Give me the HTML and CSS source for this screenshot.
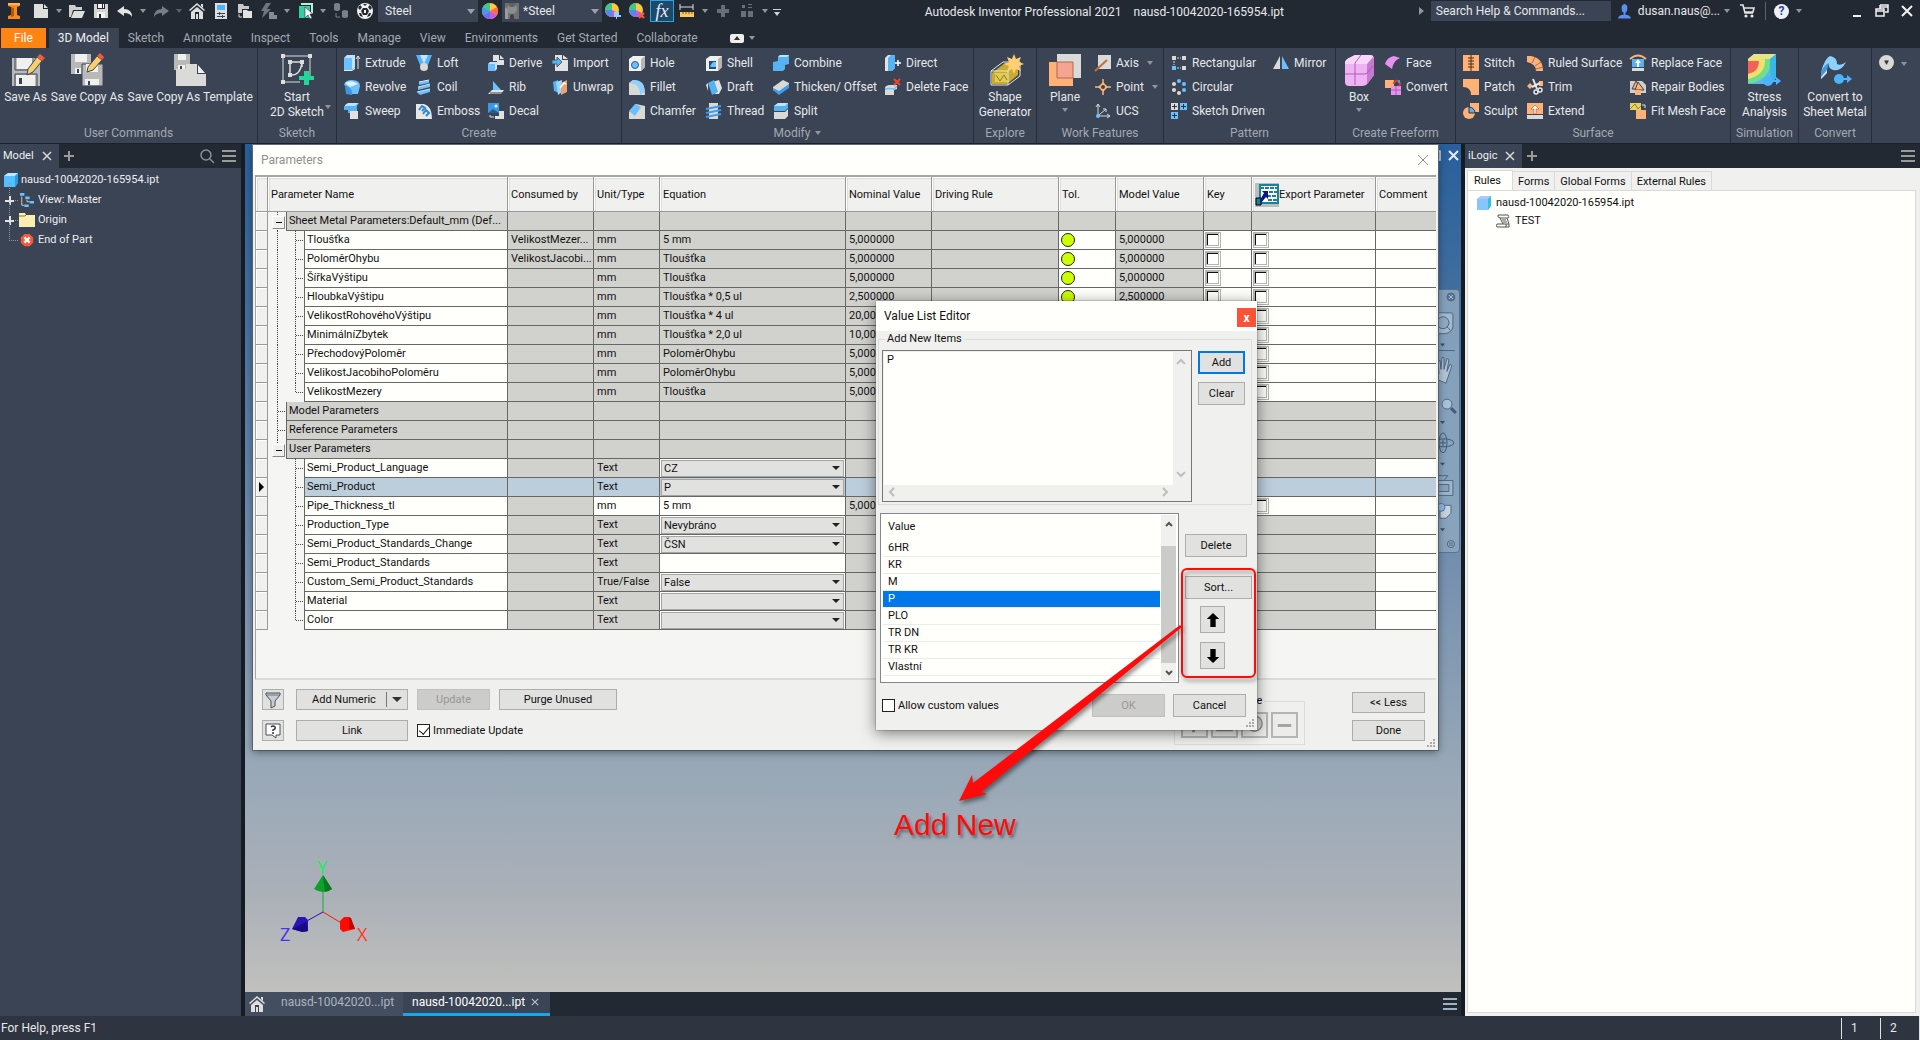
FILE: index.html
```html
<!DOCTYPE html>
<html lang="en">
<head>
<meta charset="utf-8">
<title>Autodesk Inventor Professional 2021</title>
<link rel="stylesheet" href="styles.css">
</head>
<body>
<header class="titlebar">
  <div class="qat">
    <svg class="logo" viewBox="0 0 16 18"><path d="M2 1h12v3l-3 1v8l3 1v3H2v-3l3-1V5L2 4z" fill="#f58a1e"/><path d="M5 5l3 1v8l-3 1z" fill="#b65606"/><path d="M2 1h12v2H2z" fill="#ffb35e"/></svg>
    <button class="ico" aria-label="New"><svg viewBox="0 0 16 16"><path d="M1 1h9v5h5v9H1z" fill="#dededc"/><path d="M11 1l4 4h-4z" fill="#dededc"/></svg></button><i class="caret"></i>
    <button class="ico" aria-label="Open"><svg viewBox="0 0 16 16"><path d="M0 2h6l1 2h6v3H4l-2 7H0z" fill="#cfcfcd"/><path d="M5 8h11l-3 7H2z" fill="#dededc"/></svg></button>
    <button class="ico" aria-label="Save"><svg viewBox="0 0 16 16"><path d="M1 1h14v14H1z" fill="#d5d5d3"/><path d="M4 1h8v5H4z" fill="#222933"/><path d="M5 1h4v4H5zM10 1h1v4h-1zM4 9h8v6H4z" fill="#f4f4f2"/><path d="M6 11h2v4H6z" fill="#222933"/></svg></button>
    <button class="ico" aria-label="Undo"><svg viewBox="0 0 16 16"><path d="M0 8l7-5v3q8 0 8 8-2-4-8-4v3z" fill="#e4e4e2"/></svg></button><i class="caret"></i>
    <button class="ico dim" aria-label="Redo"><svg viewBox="0 0 16 16"><path d="M16 8L9 3v3q-8 0-8 8 2-4 8-4v3z" fill="#787d85"/></svg></button><i class="caret dim"></i>
    <button class="ico" aria-label="Home"><svg viewBox="0 0 16 16"><path d="M8 0l8 7-1 1-7-6-7 6-1-1zM12 1h2v4l-2-2z" fill="#dededc"/><path d="M2 9l6-5 6 5v7H2z" fill="#dededc"/><path d="M6 9h4v7H9v-5H7v5H6z" fill="#222933"/></svg></button>
    <button class="ico" aria-label="Properties"><svg viewBox="0 0 16 16"><path d="M2 0h12v16H2z" fill="#dededc"/><path d="M4 2h8v5H4z" fill="#4cb4ff"/><path d="M4 10h8v1H4zM4 13h8v1H4zM6 9h1v3H6zM9 12h1v3H9z" fill="#3b4454"/></svg></button>
    <button class="ico" aria-label="Project"><svg viewBox="0 0 16 16"><path d="M1 1h5l1 2h5v3H5v4H1z" fill="#c9c9c7"/><path d="M6 7h4l1 1h4v7H6z" fill="#e4e4e2"/><path d="M2 11v3h3" stroke="#dededc" fill="none"/></svg></button>
    <button class="ico dim" aria-label="Local update"><svg viewBox="0 0 16 16"><path d="M5 0h5L6 6h4L1 15l2-7H0z" fill="#70757d"/><path d="M8 9h5v3h3v4H8z" fill="#858a91"/></svg></button><i class="caret"></i>
    <button class="ico" aria-label="Select"><svg viewBox="0 0 16 16"><path d="M4 0h12v11h-2V2H4z" fill="#bdeedd"/><path d="M2 3h11v12H2z" fill="#35cf9d"/><path d="M8 4v11l3-3 2 4 2-1-2-4h3z" fill="#fff" stroke="#222933" stroke-width=".6"/></svg></button><i class="caret"></i>
    <button class="ico dim" aria-label="Relationships"><svg viewBox="0 0 16 16"><path d="M1 1q3-2 6 0v6q-3 2-6 0zM9 8q3-2 6 0v6q-3 2-6 0z" fill="#7b8088"/><path d="M3 10v4h4" stroke="#7b8088" fill="none"/></svg></button>
    <button class="ico" aria-label="Material"><svg viewBox="0 0 16 16"><circle cx="8" cy="8" r="8" fill="#f1f1ef"/><path d="M6 5h4l2 3-2 4H6L4 8zM1 5l2-3 2 2-2 3zM15 5l-2-3-2 2 2 3zM3 13l-1-3h2l2 4zM13 13l1-3h-2l-2 4zM6 1h4L8 3z" fill="#222933"/><path d="M7 7h2v3H7z" fill="#f1f1ef"/></svg></button>
    <div class="combo"><select aria-label="Material"><option>Steel</option></select></div>
    <svg class="wheel" viewBox="0 0 16 16"><circle cx="8" cy="8" r="8" fill="#ffc83d"/><path d="M8 8V0a8 8 0 0 0-7 4z" fill="#3ec98b"/><path d="M8 8L1 4a8 8 0 0 0 0 8z" fill="#3f9cf0"/><path d="M8 8l-7 4a8 8 0 0 0 7 4z" fill="#6d6cf2"/><path d="M8 8v8a8 8 0 0 0 7-4z" fill="#c35ae8"/><path d="M8 8l7 4a8 8 0 0 0 0-8z" fill="#ff6a4a"/></svg>
    <div class="combo thumb"><svg viewBox="0 0 14 16"><path d="M0 0h14v16H0z" fill="#6f7173"/><circle cx="7" cy="6" r="5" fill="#8c8d8e"/><path d="M3 0h8L9 4H5z" fill="#5f6163"/><path d="M5 16q0-5 2-5t2 5z" fill="#3d3f41"/><path d="M0 4l3 3v9H0z" fill="#9b9c9d"/></svg><select aria-label="Appearance"><option>*Steel</option></select></div>
    <button class="ico" aria-label="Adjust"><svg viewBox="0 0 16 16"><circle cx="7" cy="7" r="7" fill="#ffc83d"/><path d="M7 7V0a7 7 0 0 0-7 7z" fill="#3ec98b"/><path d="M7 7H0a7 7 0 0 0 7 7z" fill="#5a84f2"/><path d="M7 7v7a7 7 0 0 0 6-4z" fill="#c35ae8"/><path d="M9 9h5v3h2v2h-4v2h-1v-2H9z" fill="#8fd0ff"/></svg></button>
    <button class="ico" aria-label="Clear overrides"><svg viewBox="0 0 16 16"><circle cx="7" cy="7" r="7" fill="#ffc83d"/><path d="M7 7V0a7 7 0 0 0-7 7z" fill="#3ec98b"/><path d="M7 7H0a7 7 0 0 0 7 7z" fill="#5a84f2"/><path d="M7 7v7a7 7 0 0 0 6-4z" fill="#c35ae8"/><path d="M10 10l5 5M15 10l-5 5" stroke="#ff5a3c" stroke-width="2"/></svg></button>
    <button class="fx" aria-label="Parameters"><em>fx</em></button>
    <button class="ico" aria-label="Measure"><svg viewBox="0 0 16 16"><path d="M1 1v6M14 1v6M1 4h13" stroke="#dededc"/><path d="M1 9h14v5H1z" fill="#ffc95c"/><path d="M4 9v2M7 9v2M10 9v2M13 9v2" stroke="#7a5a10"/></svg></button><i class="caret"></i>
    <button class="ico dim" aria-label="Add"><svg viewBox="0 0 16 16"><path d="M6 2h4v4h4v4h-4v4H6v-4H2V6h4z" fill="#6a6f77"/></svg></button>
    <button class="ico dim" aria-label="Pattern"><svg viewBox="0 0 16 16"><path d="M3 2h3v3H3zM9 1h4v1H9zM9 4h4v1H9zM2 8h5v6H2zM9 8h5v6H9z" fill="#6a6f77"/></svg></button><i class="caret"></i>
    <i class="caret bar"></i>
  </div>
  <div class="apptitle"><span>Autodesk Inventor Professional 2021</span><span>nausd-10042020-165954.ipt</span></div>
  <div class="account">
    <i class="tri"></i>
    <input class="search" aria-label="Search" value="Search Help &amp; Commands...">
    <svg class="person" viewBox="0 0 14 16"><path d="M4 3q3-5 6 0v4q-1 3-2 3v2q5 0 6 4H0q1-4 6-4v-2Q4 9 4 7z" fill="#5c8df0"/></svg>
    <button class="plain">dusan.naus@...</button><i class="caret"></i>
    <svg class="cart" viewBox="0 0 16 16"><path d="M1 2h3l2 8h8M5 5h10l-1 4H6" stroke="#e4e4e2" stroke-width="1.6" fill="none"/><circle cx="7" cy="13" r="1.6" fill="#e4e4e2"/><circle cx="13" cy="13" r="1.6" fill="#e4e4e2"/></svg>
    <i class="vsep"></i>
    <button class="help" aria-label="Help">?</button><i class="caret"></i>
    <button class="win" aria-label="Minimize"><svg viewBox="0 0 14 14"><path d="M3 11h8v2H3z" fill="#f2f2f2"/></svg></button>
    <button class="win" aria-label="Restore"><svg viewBox="0 0 14 14"><path d="M5 1h8v7h-3M1 5h8v7H1zM5 1v4M5 3h8M1 7h8" stroke="#f2f2f2" stroke-width="1.5" fill="none"/></svg></button>
    <button class="win" aria-label="Close"><svg viewBox="0 0 14 14"><path d="M2 2l10 10M12 2L2 12" stroke="#f2f2f2" stroke-width="2"/></svg></button>
  </div>
</header>

<nav class="tabs">
  <a href="#" class="file">File</a><a href="#" class="on">3D Model</a><a href="#">Sketch</a><a href="#">Annotate</a><a href="#">Inspect</a><a href="#">Tools</a><a href="#">Manage</a><a href="#">View</a><a href="#">Environments</a><a href="#">Get Started</a><a href="#">Collaborate</a>
  <button class="mini" aria-label="Minimize ribbon"></button><i class="caret"></i>
</nav>

<section class="ribbon">
  <div class="panel p-user">
    <div class="body">
      <button class="big"><svg viewBox="0 0 32 32"><path d="M2 4h28v28H2z" fill="#b9bab8"/><path d="M7 4h17v11H7zM6 21h19v11H6z" fill="#f0f0ee"/><path d="M9 24h3v6H9z" fill="#3b4454"/><path d="M5 4v12h18V4M5 32V20h22v12" stroke="#3b4454" fill="none"/><path d="M18 15L27 3l5 4-9 11-6 3z" fill="#f7cf6d" stroke="#3b4454"/><path d="M27 3l3-3 5 4-3 3z" fill="#f2593f"/></svg>Save As</button>
      <button class="big"><svg viewBox="0 0 32 32"><path d="M0 0h20v20H0z" fill="#b9bab8"/><path d="M4 0h12v8H4zM4 14h6v6H4z" fill="#f0f0ee"/><path d="M11 10h21v22H11z" fill="#b9bab8" stroke="#3b4454"/><path d="M15 10h12v8H15zM14 25h14v6H14z" fill="#f0f0ee"/><path d="M17 27h2v4h-2zM6 15h2v4H6z" fill="#3b4454"/><path d="M17 13L26 2l5 4-9 10-6 2z" fill="#f7cf6d" stroke="#3b4454"/><path d="M26 2l3-3 4 4-2 3z" fill="#f2593f"/></svg>Save Copy As</button>
      <button class="big"><svg viewBox="0 0 32 32"><path d="M0 0h16v16H0z" fill="#b9bab8"/><path d="M4 0h8v6H4zM4 11h7v5H4z" fill="#f0f0ee"/><path d="M6 12h2v4H6z" fill="#3b4454"/><path d="M2 15h10v-5h11v10h9v12H2z" fill="#dadad8"/><path d="M24 11l7 8h-7z" fill="#f0f0ee"/></svg>Save Copy As Template</button>
    </div><h2>User Commands</h2>
  </div>
  <div class="panel p-sketch">
    <div class="body"><button class="big"><svg viewBox="0 0 32 32"><path d="M2 2h27v20M2 2v26h17" stroke="#dededc" fill="none"/><path d="M0 0h4v4H0zM27 0h4v4h-4zM0 26h4v4H0z" fill="#dededc"/><path d="M9 8h12v5M9 8v13q10 1 12-12" stroke="#dededc" stroke-width="1.5" fill="none"/><path d="M7 6h4v4H7zM19 6h4v4h-4zM7 19h4v4H7z" fill="#dededc"/><path d="M23 17h5v5h5v4h-5v5h-5v-5h-5v-4h5z" fill="#20d79b"/></svg>Start<br>2D Sketch</button><i class="caret low"></i></div>
    <h2>Sketch</h2>
  </div>
  <div class="panel p-create">
    <div class="body cols">
      <button><svg viewBox="0 0 16 16"><path d="M0 3l3-3h8v12l-3 3H0z" fill="#bfe3ff"/><path d="M0 3h8v12H0z" fill="#6cc0ff"/><path d="M0 15h8l3-3v2l-3 2H0z" fill="#e8e8e6"/><path d="M14 14V1M12 4l2-3 2 3" stroke="#e8e8e6" fill="none"/></svg>Extrude</button>
      <button><svg viewBox="0 0 16 16"><path d="M0 0h16l-4 10H4z" fill="#55b2f5"/><path d="M4 0h8L8 9z" fill="#bfe3ff"/><circle cx="8" cy="12" r="4" fill="#d9d9d6"/></svg>Loft</button>
      <button><svg viewBox="0 0 16 16"><path d="M5 0h6v5h5v5H9V6H5z" fill="#e2e2e0"/><path d="M12 0l4 4h-4z" fill="#e2e2e0"/><path d="M0 9l2-2h7v7l-2 2H0z" fill="#bfe3ff"/><path d="M0 9h7v7H0z" fill="#6cc0ff"/></svg>Derive</button>
      <button><svg viewBox="0 0 16 16"><path d="M3 0h7v5h6v11H3z" fill="#e2e2e0"/><path d="M11 0l5 4h-5z" fill="#e2e2e0"/><path d="M0 5h5V2l5 5-5 5V9H0z" fill="#55b2f5" stroke="#3b4454" stroke-width=".8"/></svg>Import</button>
      <button><svg viewBox="0 0 16 16"><path d="M0 6q1-5 8-5 8 0 8 6l-2 8H6q2-6-6-9z" fill="#6cc0ff"/><path d="M1 4q7-4 13 1l-8 3z" fill="#dff1ff"/><path d="M1 7q8 1 7 9l-6-1z" fill="#3f97e0"/></svg>Revolve</button>
      <button><svg viewBox="0 0 16 16"><path d="M3 3l10-2v3L3 6zM2 8l12-3v3L2 11zM1 13l13-3v3L4 16z" fill="#6cc0ff"/><path d="M3 3l10-2M2 8l12-3M1 13l13-3" stroke="#cfeaff"/></svg>Coil</button>
      <button><svg viewBox="0 0 16 16"><path d="M4 0v11h12l-3 4H0l4-4z" fill="#e2e2e0"/><path d="M5 2l8 9H5z" fill="#6cc0ff"/><path d="M2 14h12" stroke="#3b4454"/></svg>Rib</button>
      <button><svg viewBox="0 0 16 16"><path d="M1 3l5-2 1 13-5-2z" fill="#55b2f5"/><path d="M4 3l6-2v12l-4 3z" fill="#9ad6ff"/><path d="M9 4l6-3v12l-6 3z" fill="#e8a273"/><path d="M8 9l4-5 2 1" stroke="#fff" stroke-width="1.5" fill="none"/></svg>Unwrap</button>
      <button><svg viewBox="0 0 16 16"><path d="M0 3h7l2-3h6l-2 3v7H4V7H0z" fill="#55b2f5"/><path d="M1 2l3-2h10l-3 3H1z" fill="#bfe3ff"/><path d="M6 8h8v8H6z" fill="#e2e2e0"/></svg>Sweep</button>
      <button><svg viewBox="0 0 16 16"><path d="M0 1h8q8 2 8 15H0z" fill="#e8e8e6"/><path d="M3 7l3-4 3 2-3 3M7 11l3-4 3 3-3 3" stroke="#2a86d6" stroke-width="2" fill="none"/></svg>Emboss</button>
      <button><svg viewBox="0 0 16 16"><path d="M0 0h11v10H0z" fill="#3f97e0"/><path d="M0 10l5-4 6 4z" fill="#1c5f9e"/><circle cx="8" cy="3" r="1.5" fill="#dff1ff"/><path d="M11 8h5v8H7v-3h4z" fill="#e2e2e0"/><path d="M2 12v2h4" stroke="#e2e2e0" fill="none"/></svg>Decal</button>
    </div><h2>Create</h2>
  </div>
  <div class="panel p-modify">
    <div class="body cols">
      <button><svg viewBox="0 0 16 16"><path d="M0 4l4-3h12v11l-4 4H0z" fill="#f0f0ee"/><path d="M12 4l4-3v11l-4 4z" fill="#b6b6b4"/><circle cx="6" cy="10" r="3.500" fill="#6cc0ff" stroke="#2a5a85"/></svg>Hole</button>
      <button><svg viewBox="0 0 16 16"><path d="M0 4l4-3h12v11l-4 4H0z" fill="#f0f0ee"/><path d="M12 4l4-3v11l-4 4z" fill="#b6b6b4"/><path d="M3 6h7v8H3z" fill="#1f4f7c"/><path d="M4 11l3-4h3v5H5z" fill="#6cc0ff"/></svg>Shell</button>
      <button><svg viewBox="0 0 16 16"><path d="M0 7l5-1V2l2-2h9v9l-4 1v4l-2 2H0z" fill="#55b2f5"/><path d="M5 2l2-2h9l-2 2z" fill="#bfe3ff"/></svg>Combine</button>
      <button><svg viewBox="0 0 16 16"><path d="M0 3l3-3h7v13l-3 3H0z" fill="#e2e2e0"/><path d="M3 3l3-3h4v13l-3 3H3z" fill="#55b2f5"/><path d="M10 8h6M13 5v6" stroke="#fff" stroke-width="1.500"/></svg>Direct</button>
      <button><svg viewBox="0 0 16 16"><path d="M0 4l4-3q12 0 12 15H0z" fill="#d9d9d6"/><path d="M4 1q11-1 12 11l-5 4Q11 4 0 4z" fill="#8fd0ff"/></svg>Fillet</button>
      <button><svg viewBox="0 0 16 16"><path d="M6 3l7-2 3 8-3 6H9z" fill="#e2e2e0"/><path d="M2 4l6-3 4 12-6 3z" fill="#55b2f5"/><path d="M0 6l2-2v8z" fill="#e2e2e0"/></svg>Draft</button>
      <button><svg viewBox="0 0 16 16"><path d="M0 8L10 1l6 3v4L6 15 0 11z" fill="#d9d9d6"/><path d="M0 11v-2l6 3 10-7v4L6 16z" fill="#3f9df0"/></svg>Thicken/ Offset</button>
      <button><svg viewBox="0 0 16 16"><path d="M0 9q0-2 4-3h8v4l-3 1v5H0z" fill="#d9d9d6"/><path d="M0 10q4-1 9 0l3-3" stroke="#6cc0ff" fill="none" stroke-width="1.500"/><path d="M9 0l6 6M15 0L9 6" stroke="#f2432c" stroke-width="2"/></svg>Delete Face</button>
      <button><svg viewBox="0 0 16 16"><path d="M0 9l7-8 9 2v13H0z" fill="#d9d9d6"/><path d="M0 8l6-7 6 3-6 9z" fill="#6cc0ff"/></svg>Chamfer</button>
      <button><svg viewBox="0 0 16 16"><path d="M3 0h9v16H3z" fill="#d9d9d6"/><path d="M0 6l15-3M0 10l15-3M0 14l15-3" stroke="#3f9df0" stroke-width="2"/></svg>Thread</button>
      <button><svg viewBox="0 0 16 16"><path d="M1 3l4-3h10v5l-3 3H1z" fill="#55b2f5"/><path d="M1 3l4-3h10l-3 3z" fill="#bfe3ff"/><path d="M1 9h11l3-3v7l-3 3H1z" fill="#d9d9d6"/></svg>Split</button>
    </div><h2>Modify <i class="caret"></i></h2>
  </div>
  <div class="panel p-explore">
    <div class="body"><button class="big"><svg viewBox="0 0 32 32"><path d="M3 19L16 9h13v12L18 30H3z" fill="#c9ab2e"/><path d="M6 19h12v9H6z" fill="#e3cb56"/><path d="M2 17h17v14H2zM2 17L14 8h17v14L19 31M19 17L31 8" stroke="#e8e8e6" fill="none"/><path d="M7 21l4 6 4-6 3 5" stroke="#8f7a1f" fill="none"/><path d="M25 0l2 5 5-2-2 5 5 2-5 2 2 5-5-2-2 5-2-5-5 2 2-5-5-2 5-2-2-5 5 2z" fill="#ffd071"/></svg>Shape<br>Generator</button></div>
    <h2>Explore</h2>
  </div>
  <div class="panel p-work">
    <div class="body">
      <button class="big"><svg viewBox="0 0 32 32"><path d="M8 0h24v24H8z" fill="#dadad8"/><path d="M0 8h24v24H0z" fill="#ffb277"/><path d="M8 8h16v16H8z" fill="#f5a58f"/><path d="M8 24V8h16v16z" fill="none" stroke="#b2664e"/></svg>Plane<i class="caret under"></i></button>
      <div class="stack">
        <button><svg viewBox="0 0 16 16"><path d="M3 0h13v14H3z" fill="#dadad8"/><path d="M0 16L12 5" stroke="#c46e3a" stroke-width="2"/></svg>Axis<i class="caret"></i></button>
        <button><svg viewBox="0 0 16 16"><path d="M8 0v16M0 8h16" stroke="#ffb277" stroke-width="1.500"/><path d="M8 3l5 5-5 5-5-5z" fill="#ffb277"/><circle cx="8" cy="8" r="2" fill="#3b4454"/></svg>Point<i class="caret"></i></button>
        <button><svg viewBox="0 0 16 16"><path d="M3 14V1M1 4l2-3 2 3M3 13h12M12 11l3 2-3 2M4 12l7-6M8 6h3v3" stroke="#dadad8" fill="none"/><circle cx="3" cy="13" r="2" fill="#6cc0ff"/></svg>UCS</button>
      </div>
    </div><h2>Work Features</h2>
  </div>
  <div class="panel p-pattern">
    <div class="body cols">
      <button><svg viewBox="0 0 16 16"><path d="M1 1h4v4H1zM11 11h4v4h-4zM11 1h4v4h-4z" fill="#dadad8"/><path d="M1 11h4v4H1z" fill="#6cc0ff"/><path d="M6 3h4M6 13h4M3 6v4" stroke="#dadad8" stroke-dasharray="2 1"/></svg>Rectangular</button>
      <button><svg viewBox="0 0 16 16"><path d="M0 14L7 1v13z" fill="#dadad8"/><path d="M9 1l7 13H9z" fill="#6cc0ff"/></svg>Mirror</button>
      <button class="c1"><svg viewBox="0 0 16 16"><g fill="#6cc0ff"><circle cx="8" cy="2" r="2"/><circle cx="13" cy="5" r="2"/><circle cx="13" cy="11" r="2"/></g><g fill="#dadad8"><circle cx="8" cy="14" r="2"/><circle cx="3" cy="11" r="2"/><circle cx="3" cy="5" r="2"/></g></svg>Circular</button>
      <button class="c1"><svg viewBox="0 0 16 16"><path d="M0 0h7v7H0z" fill="#dadad8"/><path d="M9 0h7v7H9zM0 9h7v7H0z" fill="#6cc0ff"/><path d="M3.500 1v5M1 3.500h5M12.500 1v5M10 3.500h5M3.500 10v5M1 12.500h5" stroke="#2c3442"/></svg>Sketch Driven</button>
    </div><h2>Pattern</h2>
  </div>
  <div class="panel p-free">
    <div class="body">
      <button class="big"><svg viewBox="0 0 32 32"><path d="M2 9q0-3 4-5l6-3h15q4 0 4 4v16l-6 8q-2 3-6 3H6q-4 0-4-4z" fill="#efb3f4"/><path d="M24 9l6-6q1 1 1 3v15l-7 9z" fill="#c878d2"/><path d="M2 9q0-3 4-5l6-3h15q3 0 3 2l-6 7H2z" fill="#f7d6fa"/><path d="M12 9v22M2 20h21l7-8M12 9l6-8" stroke="#a95fb5" fill="none"/></svg>Box<i class="caret under"></i></button>
      <div class="stack">
        <button><svg viewBox="0 0 16 16"><path d="M0 9Q2 2 9 1l6 2Q8 6 7 14z" fill="#ea90f0"/></svg>Face</button>
        <button><svg viewBox="0 0 16 16"><path d="M0 1h9v8H0z" fill="#ffb277"/><path d="M6 7h10v9H6z" fill="#ea90f0"/><path d="M11 7v9M6 11h10" stroke="#a95fb5"/><path d="M9 5a3 3 0 1 1 5 2" stroke="#e03c28" stroke-width="2" fill="none"/><path d="M14 1v3" stroke="#3f9df0" stroke-width="2"/></svg>Convert</button>
      </div>
    </div><h2>Create Freeform</h2>
  </div>
  <div class="panel p-surface">
    <div class="body cols">
      <button><svg viewBox="0 0 16 16"><path d="M0 0h16v16H0z" fill="#ffb277"/><path d="M8 0v16M5 3h6M5 6h6M5 9h6M5 12h6" stroke="#4a2c14"/></svg>Stitch</button>
      <button><svg viewBox="0 0 16 16"><path d="M0 1h4q12 2 12 15H9Q9 9 0 7z" fill="#ffb277"/><path d="M5 8l3-6M8 11l6-4M9 14l7-2" stroke="#b2664e"/></svg>Ruled Surface</button>
      <button><svg viewBox="0 0 16 16"><path d="M0 4q8-7 16 0" stroke="#ffb277" stroke-width="2" fill="none"/><path d="M2 4h12v8H2z" fill="#55b2f5"/><path d="M8 4l3 4H9v4H7V8H5z" fill="#fff"/><path d="M2 13h12v3H2z" fill="#dadad8"/></svg>Replace Face</button>
      <button><svg viewBox="0 0 16 16"><path d="M0 0h16v16H8q0-8-8-8z" fill="#ffb277"/></svg>Patch</button>
      <button><svg viewBox="0 0 16 16"><path d="M0 7l3-3 3 3-3 3zM12 2h4v5h-4z" fill="#ffb277"/><path d="M6 0l4 10M13 4L5 8" stroke="#e8e8e6" stroke-width="2"/><circle cx="9" cy="13" r="2" fill="none" stroke="#e8e8e6" stroke-width="1.500"/><circle cx="13" cy="11" r="2" fill="none" stroke="#e8e8e6" stroke-width="1.500"/></svg>Trim</button>
      <button><svg viewBox="0 0 16 16"><path d="M0 2h12l4 4v8H0z" fill="#cfcfcd"/><path d="M6 2l5 8H2z" fill="#ffb277" stroke="#3b4454"/><path d="M8 3l6 8H5z" fill="#ffb277" stroke="#3b4454"/><path d="M5 11h6v5H5z" fill="#ffb277"/></svg>Repair Bodies</button>
      <button><svg viewBox="0 0 16 16"><path d="M7 0h9v9H7z" fill="#ffb277"/><circle cx="6" cy="10" r="6" fill="#ffb277"/><path d="M6 4v6h6a6 6 0 0 0-6-6z" fill="#55b2f5" stroke="#2c3442"/></svg>Sculpt</button>
      <button><svg viewBox="0 0 16 16"><path d="M0 0h16v11H0z" fill="#ffb277"/><path d="M8 2l4 4H9v5H7V6H4z" fill="#fff" stroke="#7a4a24" stroke-width=".5"/><path d="M0 12h16v4H0z" fill="#dadad8"/></svg>Extend</button>
      <button><svg viewBox="0 0 16 16"><path d="M0 0h11v7H0z" fill="#e5d36a"/><path d="M0 6l5-5 3 5 3-3" stroke="#95842a" fill="none"/><path d="M6 7h10v9H6z" fill="#ffb277"/><path d="M12 2h3v3" stroke="#e8e8e6" fill="none"/></svg>Fit Mesh Face</button>
    </div><h2>Surface</h2>
  </div>
  <div class="panel p-sim">
    <div class="body"><button class="big"><svg viewBox="0 0 32 32"><path d="M0 5l6-5h22v24l-5 6H0z" fill="#5bb5f2"/><path d="M0 5h22q2 19-18 24H0z" fill="#6ee08a"/><path d="M0 5h17q1 16-17 20z" fill="#f3e06a"/><path d="M0 7h11q0 11-11 13z" fill="#f5605a"/><path d="M0 5l6-5h22l-6 5z" fill="#e9e487"/><path d="M22 5l6-5v24l-5 6z" fill="#37b6e8"/><circle cx="20" cy="27" r="5" fill="#4cb4ff"/><path d="M24 26h4v-3l5 4-5 4v-3h-4z" fill="#4cb4ff"/></svg>Stress<br>Analysis</button></div>
    <h2>Simulation</h2>
  </div>
  <div class="panel p-conv">
    <div class="body"><button class="big"><svg viewBox="0 0 32 32"><path d="M2 18q4-14 9-16 7 1 7 8 4 2 9-2-5 10-13 8-5-2-4-6-5 3-8 8z" fill="#8fd0ff"/><path d="M2 18q4-8 8-9l-3 11-5 5z" fill="#3f97e0"/><path d="M2 25l6-6v-3l-6 7z" fill="#e2e2e0"/><circle cx="20" cy="25" r="5" fill="#4cb4ff"/><path d="M24 24h4v-3l5 4-5 4v-3h-4z" fill="#4cb4ff"/></svg>Convert to<br>Sheet Metal</button></div>
    <h2>Convert</h2>
  </div>
  <div class="panel p-end"><button class="round" aria-label="Show panels">▼</button><i class="caret"></i></div>
</section>

<main class="work">
  <aside class="browser">
    <div class="ptabs"><span class="ptab">Model <svg viewBox="0 0 10 10"><path d="M1 1l8 8M9 1L1 9" stroke="#d8d8d6" stroke-width="1.500"/></svg></span><button class="plus" aria-label="Add panel"></button>
      <button class="lens" aria-label="Search"><svg viewBox="0 0 14 14"><circle cx="6" cy="6" r="5" fill="none" stroke="#8e8f90" stroke-width="1.500"/><path d="M10 10l4 4" stroke="#8e8f90" stroke-width="1.500"/></svg></button><button class="burger" aria-label="Menu"></button></div>
    <ul class="tree">
      <li><svg viewBox="0 0 14 14"><path d="M0 3l4-3h10v10l-3 4H0z" fill="#55c0ff"/><path d="M0 3l4-3h10l-3 3z" fill="#bfe6ff"/><path d="M11 3l3-3v10l-3 4z" fill="#2a9be6"/></svg>nausd-10042020-165954.ipt</li>
      <li class="br"><b></b><svg class="w16" viewBox="0 0 16 16"><path d="M0 0h5v3H0zM6 4h5v3H6zM11 9h5v3h-5zM5 13h5v3H5z" fill="#6cc0ff"/><path d="M2 4v10h3M8 8v2h3" stroke="#dadad8" fill="none"/></svg>View: Master</li>
      <li class="br"><b></b><svg class="w16" viewBox="0 0 16 14"><path d="M0 0h6l1 2h9v12H0z" fill="#fbeeb0"/><path d="M0 3h6l1-1" stroke="#8a7c3a" fill="none"/></svg>Origin</li>
      <li class="br last"><b class="none"></b><svg class="w16" viewBox="0 0 16 16"><path d="M5 1h6l4 4v6l-4 4H5l-4-4V5z" fill="#f95738"/><path d="M5 5l6 6M11 5l-6 6" stroke="#fff" stroke-width="2.500"/></svg>End of Part</li>
    </ul>
  </aside>

  <div class="canvas">
    <div class="mdi"><svg viewBox="0 0 24 12"><path d="M1 1h4v9H0" stroke="#d5e0ee" stroke-width="1.500" fill="none"/><path d="M14 1l9 9M23 1l-9 9" stroke="#e4ebf4" stroke-width="2"/></svg></div>
    <div class="navbar">
      <svg viewBox="0 0 34 264">
        <g fill="none" stroke="#4f6780"><circle cx="26" cy="7" r="4" fill="#5d758f"/><path d="M24 5l4 4M28 5l-4 4" stroke="#c4d2e0"/></g>
        <path d="M6 23h20q2 0 2 2v12q-1 6-8 7H6z" fill="#b4c6d6" stroke="#4f6780"/><circle cx="18" cy="33" r="6" fill="#9db4c9" stroke="#4f6780"/><path d="M22 37l4 4" stroke="#4f6780"/>
        <path d="M15 54h5l-2.500 3zM15 132h5l-2.500 3zM15 174h5l-2.500 3zM15 240h5l-2.500 3z" fill="#2f4660"/>
        <path d="M10 61h20" stroke="#4f6780"/>
        <path d="M14 91l-5-9 2-1 3 3-1-13h2l1 9 1-12h2v12l3-11 2 1-2 12 3-7 2 1-4 12-2 6z" fill="#c3d1de" stroke="#4f6780"/>
        <circle cx="22" cy="115" r="5" fill="#b9d0e4" stroke="#4f6780"/><path d="M26 119l5 5" stroke="#3f566e" stroke-width="3"/><path d="M10 108h4M10 115h4" stroke="#4f6780"/>
        <ellipse cx="18" cy="154" rx="4" ry="10" fill="none" stroke="#3f566e"/><ellipse cx="19" cy="154" rx="10" ry="4" fill="none" stroke="#3f566e"/><path d="M15 154h6M18 151v6" stroke="#3f566e"/>
        <path d="M8 187h15l-4 5" fill="none" stroke="#4f6780"/><path d="M6 192h22v15H6z" fill="#aabfd2" stroke="#4f6780"/><path d="M12 196h12v7H12z" fill="#8ea9c1" stroke="#4f6780"/>
        <path d="M15 221l5-4h6v8l-5 5h-6z" fill="#d6e0e9" stroke="#4f6780"/><circle cx="16" cy="219" r="4" fill="#9dbce6" stroke="#4772bb"/>
        <circle cx="26" cy="256" r="3.500" fill="#a9bccd" stroke="#3f566e"/><path d="M24 255h4M24 257h4" stroke="#3f566e"/>
      </svg>
    </div>

    <section class="window" aria-label="Parameters">
      <header><h1>Parameters</h1><button aria-label="Close"><svg viewBox="0 0 12 12"><path d="M1 1l10 10M11 1L1 11" stroke="#8f8f8d"/></svg></button></header>
      <div class="gridbox">
      <table>
        <colgroup><col class="k0"><col class="k1"><col class="k2"><col class="k3"><col class="k4"><col class="k5"><col class="k6"><col class="k7"><col class="k8"><col class="k9"><col class="k10"><col></colgroup>
        <thead><tr><th></th><th>Parameter Name</th><th>Consumed by</th><th>Unit/Type</th><th>Equation</th><th>Nominal Value</th><th>Driving Rule</th><th>Tol.</th><th>Model Value</th><th>Key</th><th class="exp"><div><svg viewBox="0 0 24 24"><path d="M0 0h24v24H0z" fill="#bdbdbb"/><path d="M5 2h18v18H5z" fill="#fff" stroke="#17829c" stroke-width="2"/><path d="M5 5h18M9 9h14M12 13h11M13 17h10" stroke="#17829c" stroke-width="2" stroke-dasharray="4 1"/><path d="M1 15h5v7H1z" fill="#17829c" stroke="#000"/><path d="M5 17l4-7-2-2h6v8l-2-2-5 6z" fill="#12128c"/></svg>Export Parameter</div></th><th>Comment</th></tr></thead>
        <tbody>
        <tr class="g"><td></td><td><div class="n grp open"><span>Sheet Metal Parameters:Default_mm (Def...</span></div></td><td></td><td></td><td></td><td></td><td></td><td></td><td></td><td></td><td></td><td></td></tr>
        <tr class="s"><td></td><td><div class="n"><span>Tloušťka</span></div></td><td>VelikostMezer...</td><td>mm</td><td>5 mm</td><td>5,000000</td><td></td><td><i class="dot"></i></td><td>5,000000</td><td><input type="checkbox" aria-label="Key"></td><td><input type="checkbox" aria-label="Export"></td><td></td></tr>
        <tr class="s"><td></td><td><div class="n"><span>PoloměrOhybu</span></div></td><td>VelikostJacobi...</td><td>mm</td><td>Tloušťka</td><td>5,000000</td><td></td><td><i class="dot"></i></td><td>5,000000</td><td><input type="checkbox" aria-label="Key"></td><td><input type="checkbox" aria-label="Export"></td><td></td></tr>
        <tr class="s"><td></td><td><div class="n"><span>ŠířkaVýštipu</span></div></td><td></td><td>mm</td><td>Tloušťka</td><td>5,000000</td><td></td><td><i class="dot"></i></td><td>5,000000</td><td><input type="checkbox" aria-label="Key"></td><td><input type="checkbox" aria-label="Export"></td><td></td></tr>
        <tr class="s"><td></td><td><div class="n"><span>HloubkaVýštipu</span></div></td><td></td><td>mm</td><td>Tloušťka * 0,5 ul</td><td>2,500000</td><td></td><td><i class="dot"></i></td><td>2,500000</td><td><input type="checkbox" aria-label="Key"></td><td><input type="checkbox" aria-label="Export"></td><td></td></tr>
        <tr class="s"><td></td><td><div class="n"><span>VelikostRohovéhoVýštipu</span></div></td><td></td><td>mm</td><td>Tloušťka * 4 ul</td><td>20,00</td><td></td><td></td><td></td><td></td><td><input type="checkbox" aria-label="Export"></td><td></td></tr>
        <tr class="s"><td></td><td><div class="n"><span>MinimálníZbytek</span></div></td><td></td><td>mm</td><td>Tloušťka * 2,0 ul</td><td>10,00</td><td></td><td></td><td></td><td></td><td><input type="checkbox" aria-label="Export"></td><td></td></tr>
        <tr class="s"><td></td><td><div class="n"><span>PřechodovýPoloměr</span></div></td><td></td><td>mm</td><td>PoloměrOhybu</td><td>5,000</td><td></td><td></td><td></td><td></td><td><input type="checkbox" aria-label="Export"></td><td></td></tr>
        <tr class="s"><td></td><td><div class="n"><span>VelikostJacobihoPoloměru</span></div></td><td></td><td>mm</td><td>PoloměrOhybu</td><td>5,000</td><td></td><td></td><td></td><td></td><td><input type="checkbox" aria-label="Export"></td><td></td></tr>
        <tr class="s"><td></td><td><div class="n end"><span>VelikostMezery</span></div></td><td></td><td>mm</td><td>Tloušťka</td><td>5,000</td><td></td><td></td><td></td><td></td><td><input type="checkbox" aria-label="Export"></td><td></td></tr>
        <tr class="g"><td></td><td><div class="n grp"><span>Model Parameters</span></div></td><td></td><td></td><td></td><td></td><td></td><td></td><td></td><td></td><td></td><td></td></tr>
        <tr class="g"><td></td><td><div class="n grp"><span>Reference Parameters</span></div></td><td></td><td></td><td></td><td></td><td></td><td></td><td></td><td></td><td></td><td></td></tr>
        <tr class="g"><td></td><td><div class="n grp open fin"><span>User Parameters</span></div></td><td></td><td></td><td></td><td></td><td></td><td></td><td></td><td></td><td></td><td></td></tr>
        <tr class="u"><td></td><td><div class="n us"><span>Semi_Product_Language</span></div></td><td></td><td>Text</td><td><select aria-label="Language"><option>CZ</option></select></td><td></td><td></td><td></td><td></td><td></td><td></td><td></td></tr>
        <tr class="u sel"><td></td><td><div class="n us"><span>Semi_Product</span></div></td><td></td><td>Text</td><td><select aria-label="Product"><option>P</option></select></td><td></td><td></td><td></td><td></td><td></td><td></td><td></td></tr>
        <tr class="u pipe"><td></td><td><div class="n us"><span>Pipe_Thickness_tl</span></div></td><td></td><td>mm</td><td>5 mm</td><td>5,000</td><td></td><td></td><td></td><td></td><td><input type="checkbox" aria-label="Export"></td><td></td></tr>
        <tr class="u"><td></td><td><div class="n us"><span>Production_Type</span></div></td><td></td><td>Text</td><td><select aria-label="Production"><option>Nevybráno</option></select></td><td></td><td></td><td></td><td></td><td></td><td></td><td></td></tr>
        <tr class="u"><td></td><td><div class="n us"><span>Semi_Product_Standards_Change</span></div></td><td></td><td>Text</td><td><select aria-label="Change"><option>ČSN</option></select></td><td></td><td></td><td></td><td></td><td></td><td></td><td></td></tr>
        <tr class="u"><td></td><td><div class="n us"><span>Semi_Product_Standards</span></div></td><td></td><td>Text</td><td></td><td></td><td></td><td></td><td></td><td></td><td></td><td></td></tr>
        <tr class="u"><td></td><td><div class="n us"><span>Custom_Semi_Product_Standards</span></div></td><td></td><td>True/False</td><td><select aria-label="Custom"><option>False</option></select></td><td></td><td></td><td></td><td></td><td></td><td></td><td></td></tr>
        <tr class="u"><td></td><td><div class="n us"><span>Material</span></div></td><td></td><td>Text</td><td><select aria-label="Material"><option></option></select></td><td></td><td></td><td></td><td></td><td></td><td></td><td></td></tr>
        <tr class="u"><td></td><td><div class="n us end"><span>Color</span></div></td><td></td><td>Text</td><td><select aria-label="Color"><option></option></select></td><td></td><td></td><td></td><td></td><td></td><td></td><td></td></tr>
        </tbody>
      </table>
      </div>
      <footer>
        <div class="left">
          <button class="btn sq" aria-label="Filter"><svg viewBox="0 0 16 16"><path d="M1 1h14v2l-5 6v5l-4 2V9L1 3z" fill="#c9cdd3" stroke="#4b5058"/><path d="M2 3h12" stroke="#6e747c"/></svg></button>
          <button class="btn split">Add Numeric<i></i></button>
          <button class="btn" disabled>Update</button>
          <button class="btn wide">Purge Unused</button>
          <button class="btn sq" aria-label="Help"><svg viewBox="0 0 16 16"><path d="M1 1h14v11h-4v3l-4-3H1z" fill="#fff" stroke="#4b5058"/><path d="M6 4q2-2 4 0 1 2-2 3v1M8 9v2" stroke="#333" stroke-width="1.500" fill="none"/></svg></button>
          <button class="btn">Link</button>
          <label class="check"><input type="checkbox" checked>Immediate Update</label>
        </div>
        <fieldset class="tolbox"><legend>Reset Tolerance</legend>
          <button aria-label="Plus"><svg viewBox="0 0 24 22"><path d="M11 5v14" stroke="#8f8f8d" stroke-width="3"/></svg></button><button aria-label="Median"><svg viewBox="0 0 24 22"><path d="M8 6h8l5 12H3z" fill="#8f8f8d"/></svg></button><button aria-label="Nominal"><svg viewBox="0 0 24 22"><circle cx="12" cy="10" r="8" fill="#cfcfcd" stroke="#8f8f8d" stroke-width="1.500"/></svg></button><button aria-label="Minus"><svg viewBox="0 0 24 22"><path d="M5 12h14" stroke="#a1a19f" stroke-width="3"/></svg></button>
        </fieldset>
        <div class="right"><button class="btn">&lt;&lt; Less</button><button class="btn">Done</button></div>
        <i class="grip"></i>
      </footer>
    </section>

    <section class="dialog" aria-label="Value List Editor">
      <header><h1>Value List Editor</h1><button aria-label="Close">x</button></header>
      <fieldset><legend>Add New Items</legend>
        <div class="memo"><textarea aria-label="New items">P</textarea>
          <svg class="vs" viewBox="0 0 16 134"><path d="M4 12l4-4 4 4M4 121l4 4 4-4" stroke="#bdbdbb" stroke-width="2" fill="none"/></svg>
          <svg class="hs" viewBox="0 0 306 16"><path d="M10 3L6 7l4 4M279 3l4 4-4 4" stroke="#bdbdbb" stroke-width="2" fill="none"/></svg>
        </div>
        <div class="side"><button class="btn focus">Add</button><button class="btn">Clear</button></div>
      </fieldset>
      <div class="mid">
        <div class="list">
          <ul><li class="h">Value</li><li>6HR</li><li>KR</li><li>M</li><li class="sel">P</li><li>PLO</li><li>TR DN</li><li>TR KR</li><li>Vlastní</li></ul>
          <div class="sb"><svg viewBox="0 0 16 16"><path d="M5 11l3-3 3 3" stroke="#555" stroke-width="2" fill="none"/></svg><i></i><svg viewBox="0 0 16 16"><path d="M5 6l3 3 3-3" stroke="#555" stroke-width="2" fill="none"/></svg></div>
        </div>
        <div class="acts">
          <button class="btn del">Delete</button>
          <button class="btn sort">Sort...</button>
          <button class="btn mv" aria-label="Move up"><svg viewBox="0 0 16 18"><path d="M8 1l7 7h-4v9H5V8H1z" fill="#000"/></svg></button>
          <button class="btn mv" aria-label="Move down"><svg viewBox="0 0 16 18"><path d="M8 17l7-7h-4V1H5v9H1z" fill="#000"/></svg></button>
        </div>
      </div>
      <div class="foot"><label class="check"><input type="checkbox">Allow custom values</label><button class="btn" disabled>OK</button><button class="btn">Cancel</button></div>
      <i class="grip"></i>
    </section>

    <svg class="mark" viewBox="0 0 400 300"><rect x="307" y="11" width="73" height="108" rx="5" fill="none" stroke="#ff0a0a" stroke-width="2"/><path d="M305 67L98 225l-1-8-13 26 28-7-6-2L307 69z" fill="#ff0a0a"/></svg>
    <div class="note">Add New</div>

    <svg class="triad" viewBox="0 0 100 90"><path d="M48 57V30" stroke="#0cb02c"/><path d="M48 57L30 67" stroke="#2514a8"/><path d="M48 57l20 12" stroke="#ff1800"/><path d="M48 20l9 14q-9 6-18 0z" fill="#0ca02c"/><path d="M48 20l9 14q-4 3-7 3z" fill="#087a1e"/><path d="M17 74l6-12h7l3 3v11l-5 1z" fill="#2a14b4"/><path d="M17 74l14-7 2 9-6 1z" fill="#180a84"/><path d="M80 74l-5-12h-6l-4 4v8l3 3z" fill="#ff0a00"/><path d="M80 74l-4-11-2 0 0 11z" fill="#c40500"/><text x="42" y="19" fill="#14f05a">Y</text><text x="82" y="86" fill="#ff3a1c">X</text><text x="5" y="86" fill="#4a32ea">Z</text></svg>

    <div class="doctabs">
      <button class="dhome" aria-label="Home"><svg viewBox="0 0 16 16"><path d="M8 0l8 7-1 1-7-6-7 6-1-1zM12 1h2v4l-2-2z" fill="#dededc"/><path d="M2 9l6-5 6 5v7H2z" fill="#dededc"/><path d="M6 9h4v7H9v-5H7v5H6z" fill="#3b4454"/></svg></button>
      <a href="#">nausd-10042020...ipt</a><a href="#" class="on">nausd-10042020...ipt <svg viewBox="0 0 10 10"><path d="M1 1l8 8M9 1L1 9" stroke="#b8bec8" stroke-width="1.500"/></svg></a>
      <button class="burger" aria-label="Menu"></button>
    </div>
  </div>

  <aside class="ilogic">
    <div class="ptabs"><span class="ptab">iLogic <svg viewBox="0 0 10 10"><path d="M1 1l8 8M9 1L1 9" stroke="#d8d8d6" stroke-width="1.500"/></svg></span><button class="plus" aria-label="Add panel"></button><button class="burger" aria-label="Menu"></button></div>
    <div class="rtabs"><a href="#" class="on">Rules</a><a href="#">Forms</a><a href="#">Global Forms</a><a href="#">External Rules</a></div>
    <ul class="rules">
      <li><svg viewBox="0 0 14 14"><path d="M0 3l4-3h10v10l-3 4H0z" fill="#86c6ff"/><path d="M0 3l4-3h10l-3 3z" fill="#b0c8f8"/><path d="M11 3l3-3v10l-3 4z" fill="#30c4d8"/></svg>nausd-10042020-165954.ipt</li>
      <li class="in"><svg viewBox="0 0 14 14"><path d="M2 1h10q2 3-1 3H4q-3-1-2-3zM4 4l3 6M11 4l2 6M1 10h9q1 3-1 3H1q-1-1 0-3zM10 10h3v3H9M6 6h4M7 8h4" stroke="#555" fill="none"/></svg>TEST</li>
    </ul>
  </aside>
</main>

<footer class="status"><span>For Help, press F1</span><b>1</b><b>2</b></footer>
</body>
</html>
```
FILE: styles.css
```css
:root {
  --ui: Roboto, "Noto Sans", sans-serif;
  --dlg: Roboto, "Noto Sans", sans-serif;
  --dark: #222933;
  --slate: #3b4454;
  --white: #fffffb;
  --face: #f0f0ee;
}
* { box-sizing: border-box; }
body {
  margin: 0;
  height: 100vh;
  display: grid;
  grid-template-rows: 28px 20px 96px minmax(0, 1fr) 24px;
  grid-template-columns: minmax(0, 1fr);
  background: var(--dark);
  color: #e6e8ea;
  font: 12px/16px var(--ui);
  overflow: hidden;
}
button, input, select, textarea { font: inherit; color: inherit; margin: 0; }
button { padding: 0; border: 0; background: none; }
a { color: inherit; text-decoration: none; }
svg { display: block; flex: none; overflow: visible; }
h1, h2, ul { margin: 0; padding: 0; font: inherit; list-style: none; }
.caret { flex: none; border: 3px solid transparent; border-top: 4px solid #8f96a0; border-bottom: 0; width: 6px; height: 4px; }
.caret.dim { border-top-color: #5a616c; }

/* title bar */
.titlebar { display: flex; align-items: flex-start; justify-content: space-between; }
.qat { display: flex; align-items: center; height: 22px; padding-left: 6px; gap: 7px; }
.qat svg { width: 16px; height: 16px; }
.qat .logo { margin-right: 4px; height: 18px; }
.qat .ico { width: 17px; }
.qat .caret { margin-left: -1px; }
.qat .bar { position: relative; border-top-color: #d0d2d5; margin-top: 5px; }
.bar::before { content: ""; position: absolute; left: -4px; top: -7px; width: 8px; height: 1px; background: #d0d2d5; }
.combo { position: relative; background: var(--slate); width: 100px; height: 22px; display: flex; align-items: center; margin: 0 -4px 0 -3px; }
.combo select { appearance: none; border: 0; background: none; width: 100%; padding: 0 7px; height: 22px; }
.combo::after { content: ""; position: absolute; right: 3px; top: 9px; border: 4px solid transparent; border-top: 5px solid #9aa1ac; border-bottom: 0; }
.combo.thumb svg { width: 14px; margin-left: 3px; }
.combo.thumb select { padding: 0 0 0 4px; }
.qat .wheel { margin-left: 1px; }
.fx { width: 24px; height: 22px; margin: 0 -2px 0 -3px; border: 1px solid #2aa3e0; background: #1d4a68; font: 18px/16px "Liberation Serif", serif; color: #eef; }
.apptitle { display: flex; gap: 12px; padding: 4px 0 0 10px; white-space: nowrap; }
.account { display: flex; align-items: center; height: 22px; gap: 7px; padding-right: 6px; }
.tri { border: 4px solid transparent; border-left: 5px solid #8f96a0; border-right: 0; }
.search { width: 180px; height: 20px; border: 0; background: var(--slate); padding: 0 5px; }
.person { width: 13px; height: 16px; }
.plain { margin-right: -3px; }
.cart { width: 16px; height: 16px; margin-left: 2px; }
.vsep { width: 1px; height: 18px; background: #59616d; margin: 0 1px 0 3px; }
.help { width: 15px; height: 15px; border-radius: 50%; background: #eef0f3; color: #1d4aa8; font-weight: 700; line-height: 15px; }
.win { width: 14px; margin-left: 4px; }
.help + .caret { margin-right: 37px; }

/* ribbon tabs */
.tabs { display: flex; color: #a2a9b2; line-height: 20px; padding-left: 1px; align-items: center; }
.tabs a { padding: 0 10px 0 9px; }
.tabs .file { background: #ff8412; color: #fff; padding: 0 13px; margin-right: 3px; }
.tabs .on { background: var(--slate); color: #eceef0; }
.mini { width: 14px; height: 9px; border-radius: 2px; background: #eee; margin: 0 5px 0 22px; display: grid; place-items: center; }
.mini::after { content: ""; border: 3px solid transparent; border-bottom: 4px solid #333; border-top: 0; }

/* ribbon panels */
.ribbon { display: flex; background: var(--slate); border-bottom: 1px solid #1b212a; white-space: nowrap; }
.panel { display: flex; flex-direction: column; padding-top: 3px; border-right: 1px solid #262d38; flex: none; position: relative; }
.panel h2 { color: #a2a9b2; text-align: center; padding-top: 2px; display: flex; justify-content: center; align-items: center; gap: 5px; }
.body { height: 72px; display: flex; gap: 4px; justify-content: center; align-items: flex-start; }
.big { display: flex; flex-direction: column; align-items: center; line-height: 15px; padding-top: 3px; }
.big svg { width: 32px; height: 32px; margin-bottom: 4px; }
.cols { display: grid; grid-auto-rows: 24px; justify-content: start; align-items: center; gap: 0; padding-left: 7px; }
.cols button, .stack button { display: flex; align-items: center; gap: 5px; height: 24px; }
.cols svg, .stack svg { width: 16px; height: 16px; }
.caret.low { position: absolute; right: 5px; top: 57px; }
.caret.under { margin-top: 3px; }
.stack .caret { margin-left: 3px; }
.p-user { width: 258px; }
.p-sketch { width: 79px; }
.p-create { width: 285px; }
.p-create .cols { grid-template-columns: 72px 72px 64px 60px; }
.p-modify { width: 352px; }
.p-modify .cols { grid-template-columns: 77px 67px 112px 80px; }
.p-explore { width: 63px; }
.p-work { width: 127px; }
.p-work .body { justify-content: flex-start; padding-left: 12px; gap: 14px; }
.p-pattern { width: 172px; }
.p-pattern .cols { grid-template-columns: 102px 60px; }
.c1 { grid-column: 1; }
.p-free { width: 120px; }
.p-free .body { justify-content: flex-start; padding-left: 7px; gap: 10px; }
.p-surface { width: 275px; }
.p-surface .cols { grid-template-columns: 64px 103px 90px; }
.p-sim { width: 68px; }
.p-conv { width: 73px; }
.p-end { flex: 1; flex-direction: row; border: 0; padding: 7px 0 0 7px; gap: 7px; }
.p-end .caret { margin-top: 7px; }
.round { width: 15px; height: 15px; border-radius: 50%; background: #d9d9d6; color: #333; font-size: 8px; line-height: 15px; }

/* work area */
.work { display: grid; grid-template-columns: 241px minmax(0, 1fr) 455px; column-gap: 4px; background: #161c24; }
.browser { background: var(--slate); font: 11px/20px var(--dlg); color: #eceef0; }
.ptabs { height: 24px; background: var(--dark); display: flex; align-items: center; padding-right: 5px; }
.ptab { background: var(--slate); color: #eceef0; align-self: stretch; display: flex; align-items: center; padding: 0 7px 0 3px; gap: 8px; font: 11px/20px var(--dlg); }
.ptab svg { width: 10px; height: 10px; }
.plus { width: 10px; height: 10px; margin: 0 auto 0 5px; background: linear-gradient(#9a9a98, #9a9a98) center/10px 2px no-repeat, linear-gradient(#9a9a98, #9a9a98) center/2px 10px no-repeat; }
.lens svg { width: 14px; height: 14px; }
.burger { width: 14px; height: 12px; margin-left: 8px; background: repeating-linear-gradient(#9a9a98 0 2px, transparent 2px 5px); }
.tree { padding: 2px 0 0 4px; }
.tree li { display: flex; align-items: center; height: 20px; gap: 3px; }
.tree svg { width: 14px; height: 14px; }
.tree .w16 { width: 16px; }
.br { position: relative; }
.br::before { content: ""; position: absolute; left: 5px; top: -7px; width: 8px; height: 17px; border: 1px dotted #8d94a0; border-width: 0 0 1px 1px; }
.br b { position: relative; width: 12px; height: 9px; background: linear-gradient(#e2e2e0, #e2e2e0) 1px 4px/9px 2px no-repeat, linear-gradient(#e2e2e0, #e2e2e0) 5px 0/2px 9px no-repeat; }
.br b.none { background: none; }

/* canvas */
.canvas { position: relative; overflow: hidden; display: flex; flex-direction: column; justify-content: flex-end; background: linear-gradient(#285f9c 0, #45719f 20%, #7791b0 50%, #98a8b7 72%, #abb0b8 86%, #c0c0bd 97%); }
.mdi { position: absolute; right: 2px; top: 6px; }
.mdi svg { width: 24px; height: 12px; }
.navbar { position: absolute; right: 1px; top: 145px; background: #8ea8c0; border: 1px solid #56718f; border-radius: 0 4px 4px 0; opacity: .85; }
.navbar svg { width: 34px; height: 262px; }
.triad { position: absolute; left: 30px; bottom: 71px; width: 100px; height: 90px; font: 18px/18px "Open Sans", sans-serif; }
.doctabs { position: relative; height: 24px; background: var(--dark); display: flex; align-items: center; padding-right: 4px; line-height: 20px; }
.dhome { width: 24px; height: 24px; padding-left: 4px; background: #434e60; }
.doctabs .dhome svg { width: 16px; height: 16px; }
.doctabs a { height: 24px; width: 134px; background: #434e60; color: #adb4be; display: flex; align-items: center; padding-left: 12px; padding-bottom: 4px; gap: 6px; }
.doctabs .on { width: 147px; padding-left: 9px; padding-bottom: 1px; background: var(--slate); color: #fff; border-bottom: 3px solid #14a6f0; }
.doctabs a svg { width: 8px; height: 8px; }
.doctabs .burger { margin-left: auto; background: repeating-linear-gradient(#9fb2c4 0 2px, transparent 2px 5px); }

/* parameters window */
.window { position: absolute; left: 8px; right: 23px; top: 1px; background: var(--face); color: #111; font: 11px/16px var(--dlg); box-shadow: 0 2px 8px rgba(0, 0, 0, .45), 0 0 0 1px #6d7a88; }
.window > header { height: 30px; background: var(--white); display: flex; justify-content: space-between; align-items: center; padding: 0 9px 0 8px; color: #8f8f8d; font: 12px/16px var(--ui); }
.window > header svg { width: 12px; height: 12px; }
.gridbox { margin: 0 2px; min-height: 505px; background: #f5f5f3; border-top: 2px solid #a5a5a3; border-bottom: 2px solid #dcdcda; border-left: 1px solid #a5a5a3; }
table { table-layout: fixed; width: 100%; border-collapse: separate; border-spacing: 0; white-space: nowrap; }
.k0 { width: 12px; } .k1 { width: 240px; } .k2 { width: 86px; } .k3 { width: 66px; } .k4 { width: 186px; } .k5 { width: 86px; } .k6 { width: 127px; } .k7 { width: 57px; } .k8 { width: 88px; } .k9 { width: 48px; } .k10 { width: 124px; }
th { height: 35px; padding: 2px 3px 0; font-weight: 400; text-align: left; background: var(--face); border: 1px solid #999997; border-width: 0 1px 1px 0; box-shadow: inset 1px 1px #fff, inset 2px 2px #dededc; }
.exp div { display: flex; align-items: center; }
.exp svg { width: 24px; height: 24px; }
td { height: 19px; padding: 0 3px; background: #d1d1ce; border: 1px solid #676765; border-width: 0 1px 1px 0; line-height: 16px; }
td:last-child, th:last-child { border-right: 0; }
td:first-child { background: var(--face); border-color: #999997; box-shadow: inset 1px 1px #fff; padding: 0 3px; }
.sel td:first-child::before { content: ""; display: block; width: 0; border: 5px solid transparent; border-left-color: #000; border-right: 0; }
td:nth-child(2) { padding: 0; background: #f5f5f3; border-bottom: 0; }
.n { height: 19px; padding-left: 36px; --dv: repeating-linear-gradient(#444 0 1px, transparent 1px 2px); --dh: repeating-linear-gradient(90deg, #444 0 1px, transparent 1px 2px);
  background: var(--dv) 9px 0/1px 100% no-repeat, var(--dv) 27px 0/1px 100% no-repeat, var(--dh) 28px 9px/8px 1px no-repeat; }
.n.end { background-size: 1px 100%, 1px 9px, 8px 1px; }
.n.us { background-size: 0 0, 1px 100%, 8px 1px; }
.n.us.end { background-size: 0 0, 1px 9px, 8px 1px; }
.n.grp { padding-left: 18px; background: var(--dv) 9px 0/1px 100% no-repeat, var(--dh) 10px 9px/8px 1px no-repeat; }
.n.fin { background-size: 1px 9px, 8px 1px; }
.n span { display: block; height: 19px; padding: 1px 0 0 2px; border: 1px solid #676765; border-width: 0 0 1px 1px; background: var(--white); overflow: hidden; }
.n.grp span { background: #d1d1ce; }
.n.open { position: relative; }
.n.open::before { content: ""; position: absolute; left: 4px; top: 4px; width: 11px; height: 11px; border: 1px solid #888; border-color: #fff #888 #888 #fff; background: linear-gradient(#111, #111) center/6px 1px no-repeat var(--face); }
.s td:nth-child(8), .s td:nth-child(10), .s td:nth-child(11), .s td:nth-child(12), .u td:nth-child(5), .u td:nth-child(12), .pipe td:nth-child(4), .pipe td:nth-child(11) { background: var(--white); }
.sel td:nth-child(n+3), .sel .n span { background: #bccddc; }
td:nth-child(8), td:nth-child(10), td:nth-child(11) { padding: 0 1px; }
.dot { display: block; width: 14px; height: 14px; margin: 0 1px; border-radius: 50%; background: #ccff00; border: 1px solid #222; }
td input { appearance: none; display: block; width: 16px; height: 16px; background: var(--white); border: 2px solid #b5b5b3; border-width: 2px 3px 3px 2px; border-style: solid double double solid; box-shadow: inset 1px 1px #111; }
td:nth-child(5):has(select) { padding: 0 1px; }
td select { appearance: none; display: block; width: 100%; height: 17px; padding: 0 2px; line-height: 15px; border: 1px solid #a5a5a3; border-radius: 0; background: #e1e1df; }
td:has(select) { position: relative; }
td:has(select)::after { content: ""; position: absolute; right: 5px; top: 7px; border: 4px solid transparent; border-top: 4px solid #222; border-bottom: 0; }
.window > footer { position: relative; height: 70px; padding: 9px 13px 0 9px; display: flex; justify-content: flex-end; align-items: flex-start; }
.left { display: grid; grid-template-columns: 25px 112px 73px 118px; gap: 10px 9px; margin-right: auto; }
.btn { height: 21px; background: #e1e1df; border: 1px solid #adadab; color: #111; display: flex; justify-content: center; align-items: center; }
.btn:disabled { background: #ccccca; border-color: #c0c0be; color: #989896; }
.btn svg { width: 16px; height: 16px; }
.sq { width: 22px; }
.split { justify-content: space-between; padding-left: 15px; }
.split i { width: 21px; height: 15px; border-left: 1px solid #777; display: grid; place-items: center; }
.split i::after { content: ""; border: 5px solid transparent; border-top: 5px solid #333; border-bottom: 0; }
.check { display: flex; align-items: center; gap: 3px; grid-column: span 2; white-space: nowrap; }
.check input { appearance: none; width: 13px; height: 13px; border: 1px solid #222; background: var(--white); }
.check input:checked::before { content: ""; display: block; width: 5px; height: 8px; margin: 0 0 0 3px; border: 1px solid #222; border-width: 0 1px 1px 0; transform: rotate(40deg); }
.left .check { height: 21px; }
.tolbox { margin: 4px 47px 0 0; height: 52px; padding: 3px 6px 6px; border: 1px solid #dcdcda; display: flex; gap: 3px; }
.tolbox legend { padding: 0 2px; margin-left: 1px; }
.tolbox button { width: 27px; height: 26px; border: 2px solid #b5b5b3; background: #ececea; }
.right { display: grid; grid-template-columns: 73px; gap: 7px; padding-top: 3px; }
.grip { position: absolute; right: 2px; bottom: 2px; width: 9px; height: 9px; background: radial-gradient(#aaa, #aaa) 6px 0/2px 2px no-repeat, radial-gradient(#aaa, #aaa) 6px 3px/2px 2px no-repeat, radial-gradient(#aaa, #aaa) 3px 3px/2px 2px no-repeat, radial-gradient(#aaa, #aaa) 0 6px/2px 2px no-repeat, radial-gradient(#aaa, #aaa) 3px 6px/2px 2px no-repeat, radial-gradient(#aaa, #aaa) 6px 6px/2px 2px no-repeat; }

/* value list dialog */
.dialog { position: absolute; left: 631px; top: 157px; width: 381px; height: 429px; background: var(--face); color: #111; font: 11px/16px var(--dlg); box-shadow: 0 3px 14px rgba(0, 0, 0, .5), 0 0 1px #333; }
.dialog > header { height: 30px; background: var(--white); display: flex; justify-content: space-between; padding: 7px 1px 0 8px; font: 12px/16px var(--ui); }
.dialog > header button { width: 19px; height: 19px; background: #ff5038; color: #fff; font-weight: 700; line-height: 16px; }
.dialog fieldset { margin: 0 7px 0 2px; padding: 3px 5px 2px 3px; border: 1px solid #dcdcda; display: flex; gap: 6px; }
.dialog legend { padding: 0 2px; margin-left: 3px; line-height: 16px; }
.memo { flex: 1; height: 152px; border: 1px solid #777775; background: var(--face); padding: 1px; display: grid; grid-template-columns: 1fr 17px; grid-template-rows: 1fr 17px; }
.memo textarea { border: 0; background: var(--white); resize: none; padding: 0 3px; outline: 0; overflow: hidden; line-height: 16px; }
.vs { width: 16px; height: 133px; }
.hs { width: 306px; height: 16px; grid-column: span 2; }
.side { width: 48px; display: flex; flex-direction: column; gap: 8px; padding-top: 1px; }
.side .btn { height: 23px; width: 47px; }
.btn.focus { border: 2px solid #0078e8; }
.mid { display: flex; gap: 6px; padding: 8px 0 0 4px; }
.list { width: 299px; height: 170px; border: 1px solid #828790; background: var(--white); display: flex; padding: 1px 2px; }
.list ul { flex: 1; padding-right: 1px; }
.list li { height: 17px; padding-left: 5px; border-bottom: 1px solid #ececea; line-height: 16px; }
.list .h { height: 25px; padding-top: 4px; border-bottom: 0; }
.list .sel { background: #0078ec; color: #fff; }
.sb { width: 15px; background: var(--face); display: flex; flex-direction: column; justify-content: space-between; }
.sb svg { width: 16px; height: 16px; }
.sb i { height: 117px; margin-top: 12px; background: #cbcbc9; }
.acts { display: flex; flex-direction: column; align-items: flex-start; padding-top: 21px; }
.acts .btn { width: 62px; height: 23px; }
.acts .sort { width: 67px; margin: 19px 0 7px; }
.acts .mv { width: 25px; height: 27px; margin: 0 0 9px 15px; }
.foot { display: flex; gap: 8px; padding: 11px 11px 0 6px; align-items: center; }
.foot .check { margin-right: auto; }
.foot .btn { width: 73px; height: 23px; }

.mark { position: absolute; left: 630px; top: 414px; width: 400px; height: 300px; filter: drop-shadow(2px 3px 2px rgba(0, 0, 0, .45)); pointer-events: none; }
.note { position: absolute; left: 649px; top: 664px; color: #ff0a0a; font: 30px/34px "Liberation Sans", sans-serif; text-shadow: 2px 3px 3px rgba(0, 0, 0, .4); }

/* iLogic panel */
.ilogic { background: var(--face); color: #111; font: 11px/16px var(--dlg); display: flex; flex-direction: column; }
.rtabs { display: flex; align-items: flex-end; height: 22px; padding: 2px 0 0 2px; }
.rtabs a { height: 19px; line-height: 19px; padding: 0 5px; border: 1px solid #d9d9d7; border-bottom: 0; border-left: 0; }
.rtabs .on { height: 20px; padding: 0 11px 0 6px; background: var(--white); border-left: 1px solid #d9d9d7; }
.rules { flex: 1; margin: 0 4px 3px 2px; background: var(--white); border: 1px solid #d9d9d7; padding: 3px 9px; }
.rules li { display: flex; align-items: center; gap: 5px; height: 18px; }
.rules .in { padding-left: 19px; }
.rules svg { width: 14px; height: 14px; }

/* status bar */
.status { background: #2e3440; display: flex; align-items: center; padding-left: 1px; border-right: 1px solid #e0e0e0; }
.status span { margin-right: auto; }
.status b { font-weight: 400; width: 39px; padding-left: 9px; border-left: 1px solid #e0e0e0; line-height: 21px; color: #e6e8ea; }
```
